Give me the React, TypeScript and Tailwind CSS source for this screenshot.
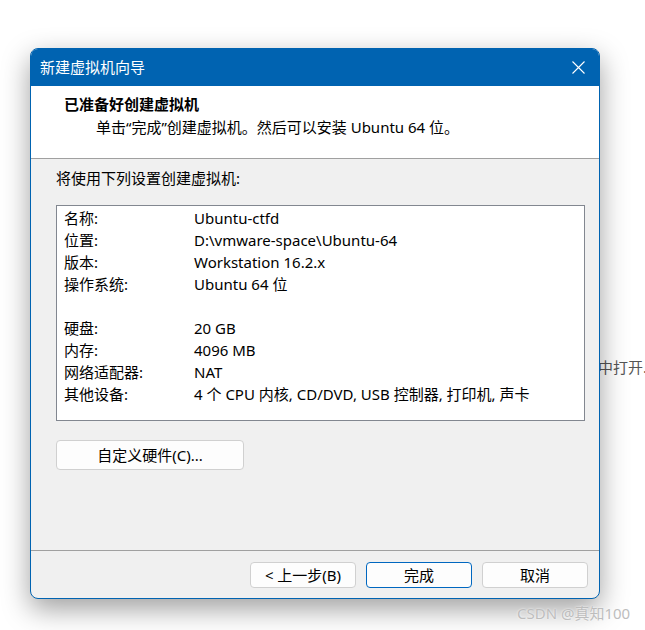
import React from "react";

const ROWS: [string, string][] = [
  ["名称:", "Ubuntu-ctfd"],
  ["位置:", "D:\\vmware-space\\Ubuntu-64"],
  ["版本:", "Workstation 16.2.x"],
  ["操作系统:", "Ubuntu 64 位"],
  ["", ""],
  ["硬盘:", "20 GB"],
  ["内存:", "4096 MB"],
  ["网络适配器:", "NAT"],
  ["其他设备:", "4 个 CPU 内核, CD/DVD, USB 控制器, 打印机, 声卡"],
];

function WinButton({ label, primary }: { label: string; primary?: boolean }) {
  return (
    <button
      className={
        "w-[106px] h-[26px] rounded-[4px] bg-[#fdfdfd] text-[15px] text-black flex items-center justify-center border " +
        (primary ? "border-[#0067c0]" : "border-[#d0d0d0]")
      }
    >
      {label}
    </button>
  );
}

export default function App() {
  return (
    <div className="relative w-[645px] h-[630px] overflow-hidden bg-white font-['Noto_Sans','Noto_Sans_CJK_SC',sans-serif] text-black">
      {/* text of the window behind */}
      <span className="absolute left-[598px] top-[356px] text-[15px] text-[#555] whitespace-nowrap">
        中打开.
      </span>

      <div className="relative ml-[30px] mt-[48px] w-[570px] h-[551px] flex flex-col rounded-[8px] border border-[#0063b1] bg-[#f0f0f0] overflow-hidden shadow-[0_10px_28px_rgba(0,0,0,0.38)]">
        {/* title bar */}
        <div className="h-[37px] shrink-0 bg-[#0063b1] flex items-center justify-between pl-[9px] pr-[14px]">
          <span className="text-[15px] text-white">新建虚拟机向导</span>
          <svg width="13" height="13" viewBox="0 0 13 13" className="text-white">
            <path d="M0.5 0.5 L12.5 12.5 M12.5 0.5 L0.5 12.5" stroke="currentColor" strokeWidth="1.1" />
          </svg>
        </div>

        {/* header */}
        <div className="h-[73px] shrink-0 bg-white border-b border-[#a0a0a0] pt-[7px]">
          <div className="pl-[33px] text-[15px] font-bold leading-[22px]">已准备好创建虚拟机</div>
          <div className="pl-[65px] text-[15px] leading-[22px] mt-[1px]">
            单击“完成”创建虚拟机。然后可以安装 Ubuntu 64 位。
          </div>
        </div>

        {/* body */}
        <div className="flex-1 flex flex-col pl-[25px] pr-[14px] pt-[8px]">
          <div className="text-[15px] leading-[22px]">将使用下列设置创建虚拟机:</div>
          <div className="mt-[16px] h-[216px] border border-[#828790] bg-white pl-[7px] pt-[1px]">
            {ROWS.map(([k, v], i) => (
              <div key={i} className="flex h-[22px] items-center text-[15px]">
                <span className="w-[130px] shrink-0">{k}</span>
                <span className="whitespace-nowrap">{v}</span>
              </div>
            ))}
          </div>
          <button className="mt-[19px] w-[188px] h-[30px] rounded-[4px] border border-[#d0d0d0] bg-[#fdfdfd] text-[15px] flex items-center justify-center">
            自定义硬件(C)...
          </button>
        </div>

        {/* footer */}
        <div className="h-[48px] shrink-0 border-t border-[#a0a0a0] flex justify-end items-start gap-[10px] pt-[11px] pr-[11px]">
          <WinButton label="< 上一步(B)" />
          <WinButton label="完成" primary />
          <WinButton label="取消" />
        </div>
      </div>

      <span className="absolute left-[517px] top-[602px] text-[15px] text-[#bdbdbd] whitespace-nowrap [text-shadow:0_0_2px_#fff]">
        CSDN @真知100
      </span>
    </div>
  );
}
